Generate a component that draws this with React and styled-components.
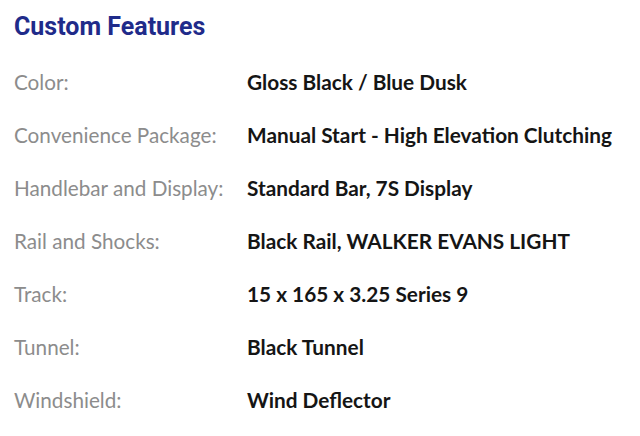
import React from "react";
import styled, { createGlobalStyle } from "styled-components";

const GlobalStyle = createGlobalStyle`
  body {
    margin: 0;
    background: #ffffff;
  }
`;

const Wrapper = styled.section`
  padding: 12px 14px 0 14px;
  font-family: "Lato", "Noto Sans", sans-serif;
`;

const Title = styled.h2`
  margin: 0 0 25px 0;
  font-family: "Roboto", "Noto Sans", sans-serif;
  font-size: 25px;
  font-weight: 700;
  color: #1f2b8a;
  line-height: 30px;
`;

const FeatureList = styled.dl`
  margin: 0;
  display: grid;
  grid-template-columns: 233px 1fr;
  row-gap: 23px;
`;

const Label = styled.dt`
  margin: 0;
  font-size: 20.7px;
  line-height: 30px;
  color: #8c8c8c;
`;

const Value = styled.dd`
  margin: 0;
  font-size: 20.8px;
  line-height: 30px;
  font-weight: 700;
  color: #151515;
`;

const features = [
  ["Color:", "Gloss Black / Blue Dusk"],
  ["Convenience Package:", "Manual Start - High Elevation Clutching"],
  ["Handlebar and Display:", "Standard Bar, 7S Display"],
  ["Rail and Shocks:", "Black Rail, WALKER EVANS LIGHT"],
  ["Track:", "15 x 165 x 3.25 Series 9"],
  ["Tunnel:", "Black Tunnel"],
  ["Windshield:", "Wind Deflector"],
];

export default function App() {
  return (
    <>
      <GlobalStyle />
      <Wrapper>
        <Title>Custom Features</Title>
        <FeatureList>
          {features.map(([label, value]) => (
            <React.Fragment key={label}>
              <Label>{label}</Label>
              <Value>{value}</Value>
            </React.Fragment>
          ))}
        </FeatureList>
      </Wrapper>
    </>
  );
}
